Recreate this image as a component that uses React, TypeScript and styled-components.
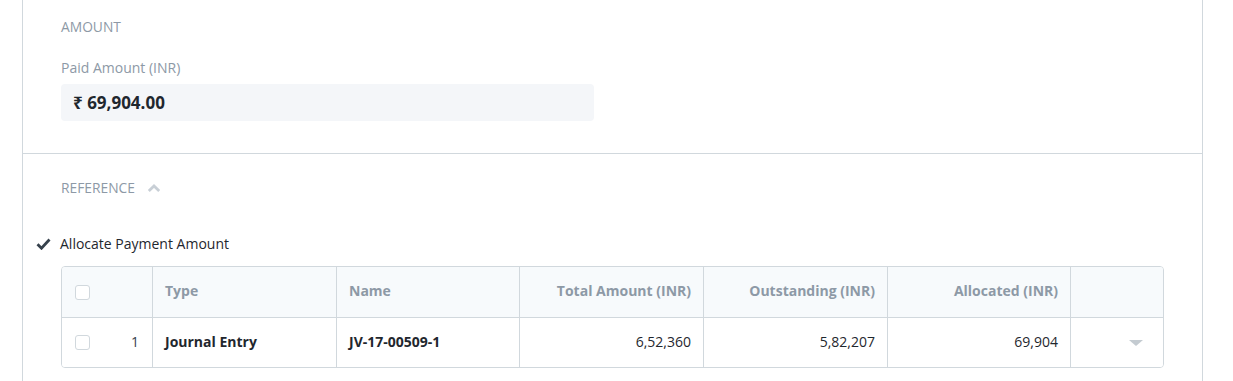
import React from 'react'
import styled, { createGlobalStyle } from 'styled-components'

const GlobalStyle = createGlobalStyle`
  body {
    margin: 0;
    background: #fff;
    font-family: "Open Sans", "Noto Sans", sans-serif;
    color: #1f272e;
  }
`

const columns = [
  { label: 'Type', width: 184, align: 'left' },
  { label: 'Name', width: 183, align: 'left' },
  { label: 'Total Amount (INR)', width: 184, align: 'right' },
  { label: 'Outstanding (INR)', width: 184, align: 'right' },
  { label: 'Allocated (INR)', width: 183, align: 'right' },
]

const rows = [
  { idx: 1, cells: ['Journal Entry', 'JV-17-00509-1', '6,52,360', '5,82,207', '69,904'] },
]

const App = () => {
  return (
    <Page>
      <GlobalStyle />
      <Panel>
        <Section>
          <SectionHead>AMOUNT</SectionHead>
          <FieldLabel>Paid Amount (INR)</FieldLabel>
          <ValueBox>₹ 69,904.00</ValueBox>
        </Section>
        <Section last>
          <SectionHead>
            REFERENCE
            <svg width="14" height="10" viewBox="0 0 14 10">
              <path d="M1.8 8 L7 3 L12.2 8" fill="none" stroke="#c8cfd6" strokeWidth="2.8" />
            </svg>
          </SectionHead>
          <CheckLine>
            <svg width="15" height="12" viewBox="0 0 15 12">
              <path d="M1.5 6.2 L5.5 10.2 L13.5 1.5" fill="none" stroke="#36414c" strokeWidth="2.8" />
            </svg>
            <span>Allocate Payment Amount</span>
          </CheckLine>
          <Grid>
            <HeadRow>
              <IdxCell>
                <Box />
              </IdxCell>
              {columns.map((c) => (
                <Cell key={c.label} w={c.width} align={c.align} head>
                  {c.label}
                </Cell>
              ))}
              <EndCell />
            </HeadRow>
            {rows.map((r) => (
              <BodyRow key={r.idx}>
                <IdxCell>
                  <Box />
                  <RowNum>{r.idx}</RowNum>
                </IdxCell>
                {r.cells.map((v, i) => (
                  <Cell key={i} w={columns[i].width} align={columns[i].align} bold={i < 2}>
                    {v}
                  </Cell>
                ))}
                <EndCell>
                  <Caret />
                </EndCell>
              </BodyRow>
            ))}
          </Grid>
        </Section>
      </Panel>
    </Page>
  )
}

export default App

const Page = styled.div`
  padding-left: 22px;
  height: 381px;
  overflow: hidden;
`

const Panel = styled.div`
  width: 1179px;
  min-height: 381px;
  border-left: 1px solid #d1d8dd;
  border-right: 1px solid #d1d8dd;
`

const Section = styled.div<{ last?: boolean }>`
  padding: ${(p) => (p.last ? '26px' : '19px')} 38px 0 38px;
  height: ${(p) => (p.last ? 'auto' : '134px')};
  border-bottom: ${(p) => (p.last ? 'none' : '1px solid #d1d8dd')};
`

const SectionHead = styled.div`
  display: flex;
  align-items: center;
  gap: 12px;
  font-size: 13.8px;
  line-height: 16px;
  color: #8d99a6;
  height: 16px;
`

const FieldLabel = styled.div`
  margin-top: 25px;
  font-size: 14px;
  line-height: 16px;
  color: #8d99a6;
`

const ValueBox = styled.div`
  margin-top: 8px;
  width: 521px;
  height: 37px;
  padding-left: 12px;
  display: flex;
  align-items: center;
  background: #f4f6f9;
  border-radius: 4px;
  font-size: 17px;
  font-weight: 700;
  color: #1f272e;
`

const CheckLine = styled.div`
  margin-top: 40px;
  margin-left: -25px;
  display: flex;
  align-items: center;
  gap: 9px;
  font-size: 14px;
  line-height: 16px;
  color: #1f272e;
`

const Grid = styled.div`
  margin-top: 14px;
  width: 1101px;
  border: 1px solid #d1d8dd;
  border-radius: 4px;
  overflow: hidden;
`

const HeadRow = styled.div`
  display: flex;
  height: 50px;
  background: #f7fafc;
  border-bottom: 1px solid #d1d8dd;
`

const BodyRow = styled.div`
  display: flex;
  height: 49px;
  background: #fff;
`

const IdxCell = styled.div`
  width: 91px;
  display: flex;
  align-items: center;
  justify-content: space-between;
  padding: 0 13px;
  box-sizing: border-box;
  border-right: 1px solid #d1d8dd;
`

const Box = styled.div`
  width: 13px;
  height: 13px;
  border: 1px solid #d1d8dd;
  border-radius: 3px;
  background: #fff;
`

const RowNum = styled.span`
  font-size: 14px;
  color: #36414c;
  padding-bottom: 3px;
`

const Cell = styled.div<{ w: number; align: string; head?: boolean; bold?: boolean }>`
  width: ${(p) => p.w}px;
  box-sizing: border-box;
  display: flex;
  align-items: center;
  justify-content: ${(p) => (p.align === 'right' ? 'flex-end' : 'flex-start')};
  padding: 0 12px 3px 12px;
  border-right: 1px solid #d1d8dd;
  font-size: 14px;
  font-weight: ${(p) => (p.head || p.bold ? 700 : 400)};
  color: ${(p) => (p.head ? '#8d99a6' : '#1f272e')};
`

const EndCell = styled.div`
  flex: 1;
  display: flex;
  align-items: center;
  justify-content: flex-end;
  padding-right: 20px;
`

const Caret = styled.div`
  width: 0;
  height: 0;
  border-left: 7px solid transparent;
  border-right: 7px solid transparent;
  border-top: 6px solid #c4cbd1;
`
